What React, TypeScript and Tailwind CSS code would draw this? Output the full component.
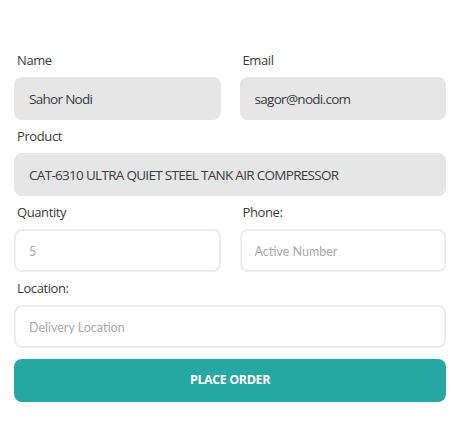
import React from "react";

const labelCls =
  "block pl-[3px] h-[20px] leading-[20px] text-[13px] tracking-[-0.4px] text-[#3a3a3a] mb-[7px]";
const filledCls =
  "w-full h-[43px] rounded-lg bg-[#e6e6e6] px-[15px] text-[13.5px] tracking-[-0.7px] text-[#3b3b3b] outline-none";
const emptyCls =
  "w-full h-[43px] rounded-lg bg-white border-2 border-[#ececec] px-[13px] text-[13.5px] text-[#3b3b3b] outline-none placeholder:text-[#a9a9a9] placeholder:text-[12.5px] placeholder:tracking-normal placeholder:font-['Lato',sans-serif]";

export default function App() {
  return (
    <div className="w-[474px] h-[440px] bg-white font-['Open_Sans',sans-serif]">
      <form className="ml-[14px] w-[432px] pt-[50px] grid grid-cols-2 gap-x-[19px] gap-y-[6px]">
        <div>
          <label className={labelCls}>Name</label>
          <input className={filledCls} defaultValue="Sahor Nodi" readOnly />
        </div>
        <div>
          <label className={labelCls}>Email</label>
          <input className={filledCls} defaultValue="sagor@nodi.com" readOnly />
        </div>
        <div className="col-span-2">
          <label className={labelCls}>Product</label>
          <input
            className={filledCls}
            defaultValue="CAT-6310 ULTRA QUIET STEEL TANK AIR COMPRESSOR"
            readOnly
          />
        </div>
        <div>
          <label className={labelCls}>Quantity</label>
          <input className={emptyCls} placeholder="5" />
        </div>
        <div>
          <label className={labelCls}>Phone:</label>
          <input className={emptyCls} placeholder="Active Number" />
        </div>
        <div className="col-span-2">
          <label className={labelCls}>Location:</label>
          <input className={emptyCls} placeholder="Delivery Location" />
        </div>
        <div className="col-span-2 pt-[5px]">
          <button
            type="button"
            className="w-full h-[43px] rounded-lg bg-[#27a7a3] text-white text-[12.5px] tracking-[-0.4px] font-bold"
          >
            PLACE ORDER
          </button>
        </div>
      </form>
    </div>
  );
}
